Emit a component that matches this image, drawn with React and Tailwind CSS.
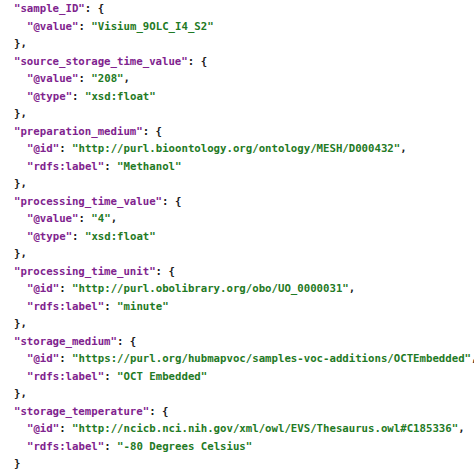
import React from 'react';

const K = ({ children }) => <span className="text-[#80238e]">"{children}"</span>;
const S = ({ children }) => <span className="text-[#1f7a25]">"{children}"</span>;

const lines = [
  [0, <><K>sample_ID</K>: {'{'}</>],
  [1, <><K>@value</K>: <S>Visium_9OLC_I4_S2</S></>],
  [0, <>{'},'}</>],
  [0, <><K>source_storage_time_value</K>: {'{'}</>],
  [1, <><K>@value</K>: <S>208</S>,</>],
  [1, <><K>@type</K>: <S>xsd:float</S></>],
  [0, <>{'},'}</>],
  [0, <><K>preparation_medium</K>: {'{'}</>],
  [1, <><K>@id</K>: <S>http://purl.bioontology.org/ontology/MESH/D000432</S>,</>],
  [1, <><K>rdfs:label</K>: <S>Methanol</S></>],
  [0, <>{'},'}</>],
  [0, <><K>processing_time_value</K>: {'{'}</>],
  [1, <><K>@value</K>: <S>4</S>,</>],
  [1, <><K>@type</K>: <S>xsd:float</S></>],
  [0, <>{'},'}</>],
  [0, <><K>processing_time_unit</K>: {'{'}</>],
  [1, <><K>@id</K>: <S>http://purl.obolibrary.org/obo/UO_0000031</S>,</>],
  [1, <><K>rdfs:label</K>: <S>minute</S></>],
  [0, <>{'},'}</>],
  [0, <><K>storage_medium</K>: {'{'}</>],
  [1, <><K>@id</K>: <S>https://purl.org/hubmapvoc/samples-voc-additions/OCTEmbedded</S>,</>],
  [1, <><K>rdfs:label</K>: <S>OCT Embedded</S></>],
  [0, <>{'},'}</>],
  [0, <><K>storage_temperature</K>: {'{'}</>],
  [1, <><K>@id</K>: <S>http://ncicb.nci.nih.gov/xml/owl/EVS/Thesaurus.owl#C185336</S>,</>],
  [1, <><K>rdfs:label</K>: <S>-80 Degrees Celsius</S></>],
  [0, <>{'}'}</>],
];

export default function App() {
  return (
    <div className="w-[474px] h-[474px] overflow-hidden bg-white pl-[14px] font-['DejaVu_Sans_Mono',monospace] text-[10.7px] font-bold leading-[17.5px] text-[#1a1a1a] whitespace-pre">
      {lines.map(([indent, content], i) => (
        <div key={i} className={indent ? 'pl-[13px]' : ''}>
          {content}
        </div>
      ))}
    </div>
  );
}
